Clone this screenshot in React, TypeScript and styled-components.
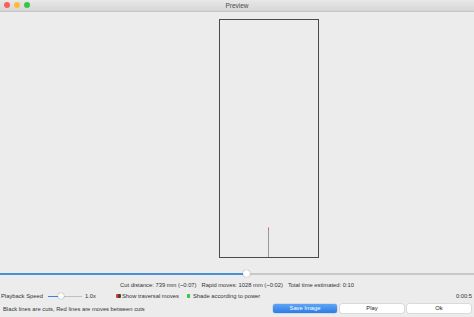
import React from 'react';
import styled, { createGlobalStyle } from 'styled-components';

const GlobalStyle = createGlobalStyle`
  html, body {
    margin: 0;
    padding: 0;
    background: #ececec;
    font-family: 'Liberation Sans', Arial, sans-serif;
  }
`;

function App() {
  const progress = 52;
  return (
    <Window>
      <GlobalStyle />
      <TitleBar>
        <Lights>
          <Light color='#fc605c' />
          <Light color='#fdbc40' />
          <Light color='#34c84a' />
        </Lights>
        <Title>Preview</Title>
      </TitleBar>

      <Canvas>
        <svg width='474' height='255' viewBox='0 0 474 255'>
          <rect x='219.5' y='7.5' width='99' height='238' fill='none' stroke='#4a4a4a' strokeWidth='1' />
          <line x1='268.5' y1='218' x2='268.5' y2='245' stroke='#9a9a9a' strokeWidth='1' />
          <line x1='268.5' y1='215.5' x2='268.5' y2='218' stroke='#e06060' strokeWidth='1' />
        </svg>
      </Canvas>

      <TimeSlider>
        <Track>
          <Fill style={{ width: `${progress}%` }} />
          <Thumb style={{ left: `${progress}%` }} />
        </Track>
      </TimeSlider>

      <Stats>
        <span>Cut distance: 739 mm (~0:07)</span>
        <span>Rapid moves: 1028 mm (~0:02)</span>
        <span>Total time estimated: 0:10</span>
      </Stats>

      <Controls>
        <Label>Playback Speed</Label>
        <SpeedSlider>
          <SpeedFill />
          <SpeedThumb />
        </SpeedSlider>
        <Label>1.0x</Label>
        <Check>
          <Toggle on={false} />
          Show traversal moves
        </Check>
        <Check>
          <Toggle on />
          Shade according to power
        </Check>
        <Elapsed>0:00:5</Elapsed>
      </Controls>

      <Footer>
        <Legend>Black lines are cuts, Red lines are moves between cuts</Legend>
        <Buttons>
          <Button primary>Save Image</Button>
          <Button>Play</Button>
          <Button>Ok</Button>
        </Buttons>
      </Footer>
    </Window>
  );
}

export default App;

const Window = styled.div`
  display: flex;
  flex-direction: column;
  width: 474px;
  height: 317px;
  background: #ececec;
  color: #333;
  overflow: hidden;
`;

const TitleBar = styled.div`
  position: relative;
  display: flex;
  align-items: center;
  justify-content: center;
  height: 11px;
  background: linear-gradient(#e8e8e8, #d6d6d6);
  border-bottom: 1px solid #c4c4c4;
`;

const Lights = styled.div`
  position: absolute;
  left: 4px;
  top: 2px;
  display: flex;
  gap: 4px;
`;

const Light = styled.div<{ color: string }>`
  width: 6px;
  height: 6px;
  border-radius: 50%;
  background: ${(p) => p.color};
`;

const Title = styled.div`
  font-size: 6.5px;
  color: #4a4a4a;
`;

const Canvas = styled.div`
  height: 255px;
  line-height: 0;
`;

const TimeSlider = styled.div`
  display: flex;
  align-items: center;
  height: 13px;
`;

const Track = styled.div`
  position: relative;
  flex: 1;
  height: 2px;
  background: #c8c8c8;
`;

const Fill = styled.div`
  height: 2px;
  background: #4a90d9;
`;

const Thumb = styled.div`
  position: absolute;
  top: -3px;
  width: 7px;
  height: 7px;
  margin-left: -3px;
  border-radius: 50%;
  background: #fff;
  box-shadow: 0 0 1px rgba(0, 0, 0, 0.5);
`;

const Stats = styled.div`
  display: flex;
  gap: 5px;
  height: 10px;
  align-items: center;
  padding-left: 120px;
  font-size: 5.8px;
`;

const Controls = styled.div`
  display: flex;
  align-items: center;
  height: 12px;
  padding: 0 2px 0 1px;
  font-size: 5.8px;
`;

const Label = styled.span`
  margin-right: 4px;
`;

const SpeedSlider = styled.div`
  position: relative;
  width: 34px;
  height: 1px;
  margin: 0 3px 0 1px;
  background: #c0c0c0;
`;

const SpeedFill = styled.div`
  width: 13px;
  height: 1px;
  background: #3b82e0;
`;

const SpeedThumb = styled.div`
  position: absolute;
  left: 10px;
  top: -3px;
  width: 6px;
  height: 6px;
  border-radius: 50%;
  background: #fff;
  box-shadow: 0 0 1px rgba(0, 0, 0, 0.6);
`;

const Check = styled.span`
  display: flex;
  align-items: center;
  margin-left: 16px;
  margin-right: -8px;
`;

const Toggle = styled.span<{ on: boolean }>`
  display: inline-block;
  width: 3px;
  height: 4px;
  margin-right: 1px;
  border-radius: 1px;
  background: ${(p) => (p.on ? '#3cc64a' : '#5a3a34')};
  border-${(p) => (p.on ? 'right' : 'left')}: 2px solid ${(p) => (p.on ? '#e8e8e8' : '#d04038')};
`;

const Elapsed = styled.span`
  margin-left: auto;
`;

const Footer = styled.div`
  display: flex;
  align-items: center;
  justify-content: space-between;
  flex: 1;
  padding: 0 3px 2px 3px;
  font-size: 5.8px;
`;

const Legend = styled.span``;

const Buttons = styled.div`
  display: flex;
  gap: 3px;
`;

const Button = styled.button<{ primary?: boolean }>`
  width: 64px;
  height: 9px;
  padding: 0;
  border: none;
  border-radius: 2px;
  font-family: inherit;
  font-size: 5.8px;
  line-height: 9px;
  color: ${(p) => (p.primary ? '#fff' : '#222')};
  background: ${(p) => (p.primary ? 'linear-gradient(#5fa4f5, #2b7de9)' : '#fff')};
  box-shadow: 0 0 0 0.5px rgba(0, 0, 0, 0.15);
`;
